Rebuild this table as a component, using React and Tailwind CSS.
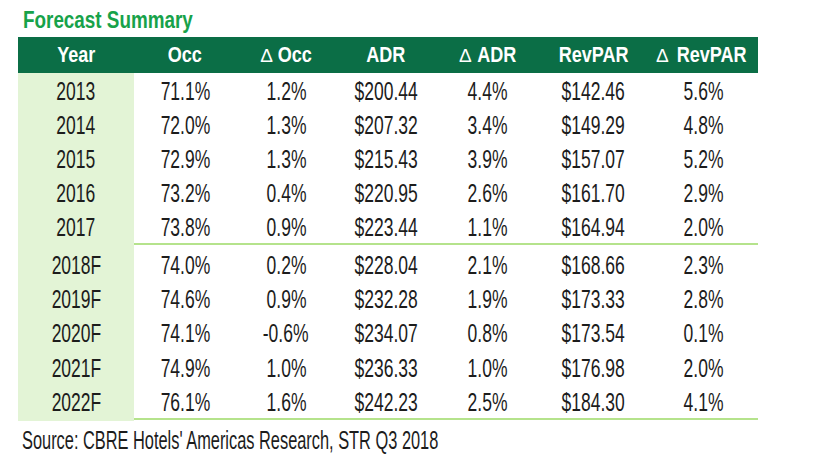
import React from "react";

const rows = [
  ["2013", "71.1%", "1.2%", "$200.44", "4.4%", "$142.46", "5.6%"],
  ["2014", "72.0%", "1.3%", "$207.32", "3.4%", "$149.29", "4.8%"],
  ["2015", "72.9%", "1.3%", "$215.43", "3.9%", "$157.07", "5.2%"],
  ["2016", "73.2%", "0.4%", "$220.95", "2.6%", "$161.70", "2.9%"],
  ["2017", "73.8%", "0.9%", "$223.44", "1.1%", "$164.94", "2.0%"],
  ["2018F", "74.0%", "0.2%", "$228.04", "2.1%", "$168.66", "2.3%"],
  ["2019F", "74.6%", "0.9%", "$232.28", "1.9%", "$173.33", "2.8%"],
  ["2020F", "74.1%", "-0.6%", "$234.07", "0.8%", "$173.54", "0.1%"],
  ["2021F", "74.9%", "1.0%", "$236.33", "1.0%", "$176.98", "2.0%"],
  ["2022F", "76.1%", "1.6%", "$242.23", "2.5%", "$184.30", "4.1%"],
];

// [label, has delta sign]
const heads = [
  ["Year", false],
  ["Occ", false],
  ["Occ", true],
  ["ADR", false],
  ["ADR", true],
  ["RevPAR", false],
  ["RevPAR", true],
];

// column widths measured off the reference
const cols = "grid grid-cols-[116px_102px_100px_100px_103px_109px_110px]";

const Row = ({ cells, h }) => (
  <div className={`${cols} ${h}`}>
    {cells.map((c, i) => (
      <div
        key={i}
        className={`flex items-center justify-center text-[25px] text-[#1c1c1c] ${i === 0 ? "bg-[#e3f4d6]" : ""}`}
      >
        <span className="inline-block whitespace-nowrap scale-x-[0.7]">{c}</span>
      </div>
    ))}
  </div>
);

export default function App() {
  return (
    <div className="w-[818px] h-[476px] bg-white pl-[18px] pt-[5px] font-['Liberation_Sans',Arial,sans-serif]">
      {/* Title */}
      <h1 className="h-[30px] mb-[2px] pl-[5px] text-[23px] leading-[30px] font-bold text-[#17a24a]">
        <span className="inline-block whitespace-nowrap origin-left scale-x-[0.82]">Forecast Summary</span>
      </h1>

      <div className="w-[740px]">
        {/* Header */}
        <div className={`${cols} h-[36px] bg-[#0b6e46]`}>
          {heads.map(([label, delta], i) => (
            <div key={i} className="flex items-center justify-center gap-[5px] text-white">
              {delta && <span className="text-[19px] font-normal leading-none">{"\u0394"}</span>}
              <span className="inline-block whitespace-nowrap text-[22px] font-bold leading-none scale-x-[0.82] -mx-[4%]">
                {label}
              </span>
            </div>
          ))}
        </div>

        {/* Actuals */}
        {rows.slice(0, 5).map((r) => (
          <Row key={r[0]} cells={r} h="h-[34px]" />
        ))}
        <div className="h-[2px] bg-[#b5e38c]" />

        {/* Forecast */}
        <div className="pt-[2px]">
          {rows.slice(5).map((r) => (
            <Row key={r[0]} cells={r} h="h-[34.2px]" />
          ))}
        </div>
        <div className="h-[2px] bg-[#b5e38c]" />
      </div>

      <p className="mt-[5px] pl-[4px] text-[25px] leading-[30px] text-[#1c1c1c]">
        <span className="inline-block whitespace-nowrap origin-left scale-x-[0.655]">
          Source: CBRE Hotels' Americas Research, STR Q3 2018
        </span>
      </p>
    </div>
  );
}
